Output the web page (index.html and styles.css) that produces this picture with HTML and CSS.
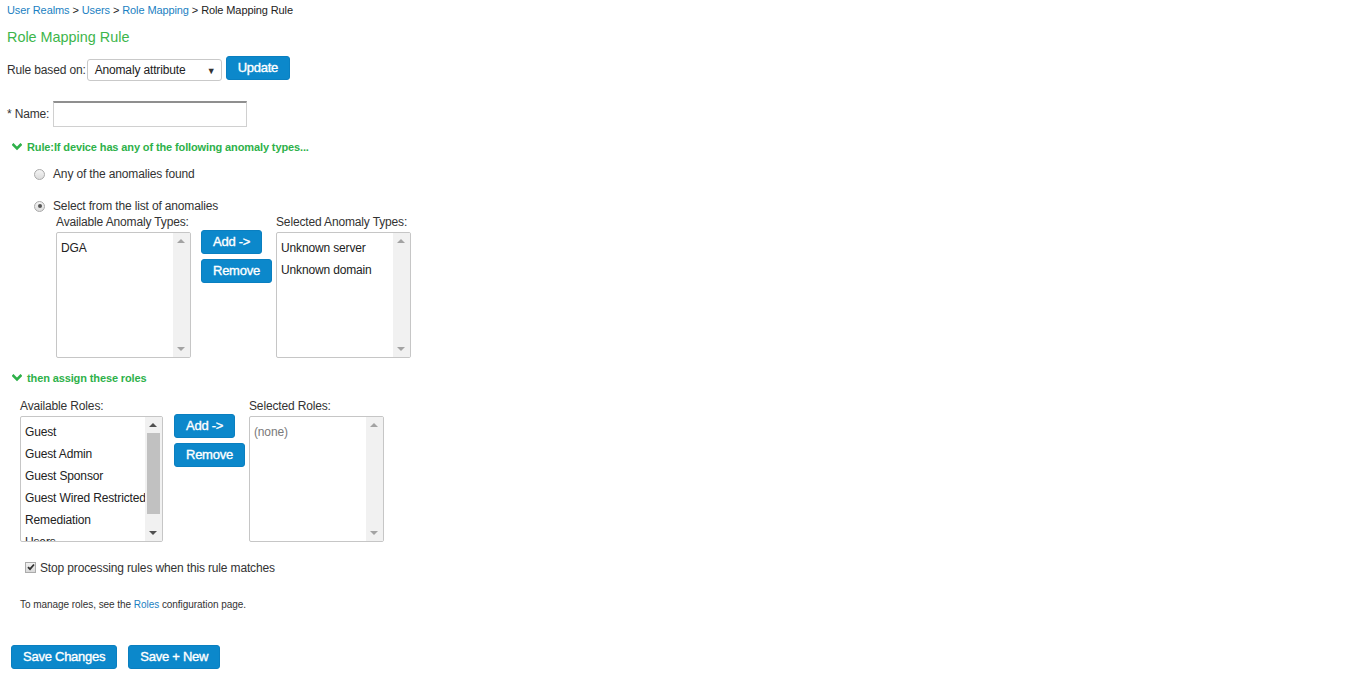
FILE: index.html
```html
<!DOCTYPE html>
<html>
<head>
<meta charset="utf-8">
<title>Role Mapping Rule</title>
<link rel="stylesheet" href="styles.css">
</head>
<body>
<div class="page">
  <div class="crumb"><a>User Realms</a> &gt; <a>Users</a> &gt; <a>Role Mapping</a> &gt; Role Mapping Rule</div>
  <h1 class="title">Role Mapping Rule</h1>

  <div class="rule-row">
    <span class="lbl">Rule based on:</span>
    <div class="select"><span>Anomaly attribute</span><span class="caret">&#9660;</span></div>
    <button class="btn btn-update">Update</button>
  </div>

  <div class="name-row">
    <span class="lbl">* Name:</span>
    <div class="textbox"></div>
  </div>

  <div class="section-head sh1">
    <svg class="chev" width="10" height="8" viewBox="0 0 10 8"><polyline points="1.5,1.8 5,5.3 8.5,1.8" fill="none" stroke="#2eb14a" stroke-width="2.6" stroke-linecap="square"/></svg>
    <span>Rule:If device has any of the following anomaly types...</span>
  </div>

  <div class="radio-row r1"><span class="radio"></span><span>Any of the anomalies found</span></div>
  <div class="radio-row r2"><span class="radio on"></span><span>Select from the list of anomalies</span></div>

  <div class="picker picker-anom">
    <div class="pcol">
      <div class="plabel">Available Anomaly Types:</div>
      <div class="listbox w135">
        <div class="items"><div>DGA</div></div>
        <div class="sbar"><span class="up"></span><span class="dn"></span></div>
      </div>
    </div>
    <div class="bcol">
      <button class="btn">Add -&gt;</button>
      <button class="btn">Remove</button>
    </div>
    <div class="pcol">
      <div class="plabel">Selected Anomaly Types:</div>
      <div class="listbox w135">
        <div class="items"><div>Unknown server</div><div>Unknown domain</div></div>
        <div class="sbar"><span class="up"></span><span class="dn"></span></div>
      </div>
    </div>
  </div>

  <div class="section-head sh2">
    <svg class="chev" width="10" height="8" viewBox="0 0 10 8"><polyline points="1.5,1.8 5,5.3 8.5,1.8" fill="none" stroke="#2eb14a" stroke-width="2.6" stroke-linecap="square"/></svg>
    <span>then assign these roles</span>
  </div>

  <div class="picker picker-roles">
    <div class="pcol">
      <div class="plabel">Available Roles:</div>
      <div class="listbox w143">
        <div class="items"><div>Guest</div><div>Guest Admin</div><div>Guest Sponsor</div><div>Guest Wired Restricted</div><div>Remediation</div><div>Users</div><div>Visitors</div></div>
        <div class="sbar dark"><span class="up"></span><span class="thumb"></span><span class="dn"></span></div>
      </div>
    </div>
    <div class="bcol">
      <button class="btn">Add -&gt;</button>
      <button class="btn">Remove</button>
    </div>
    <div class="pcol">
      <div class="plabel">Selected Roles:</div>
      <div class="listbox w135">
        <div class="items"><div class="none">(none)</div></div>
        <div class="sbar"><span class="up"></span><span class="dn"></span></div>
      </div>
    </div>
  </div>

  <div class="check-row">
    <span class="checkbox"><svg width="8" height="8" viewBox="0 0 8 8"><polyline points="1,4.2 3,6.2 7,1.5" fill="none" stroke="#333" stroke-width="1.8"/></svg></span>
    <span class="check-text">Stop processing rules when this rule matches</span>
  </div>

  <div class="note">To manage roles, see the <a>Roles</a> configuration page.</div>

  <div class="actions">
    <button class="btn">Save Changes</button>
    <button class="btn">Save + New</button>
  </div>
</div>
</body>
</html>
```

FILE: styles.css
```css
html, body {
  margin: 0;
  padding: 0;
  background: #ffffff;
}
body {
  font-family: "Liberation Sans", Arial, sans-serif;
  font-size: 12px;
  letter-spacing: -0.15px;
  color: #333333;
}
.page {
  padding-left: 7px;
  padding-top: 3px;
}
a {
  color: #1b7fc2;
  text-decoration: none;
}
.crumb {
  font-size: 11px;
  letter-spacing: -0.1px;
  line-height: 14px;
  height: 14px;
  color: #222;
}
.title {
  margin: 10px 0 0 0;
  font-size: 14.4px;
  letter-spacing: 0;
  font-weight: normal;
  line-height: 20px;
  height: 20px;
  color: #3db54b;
}
.rule-row {
  margin-top: 9px;
  display: flex;
  align-items: flex-start;
  height: 25px;
}
.lbl {
  line-height: 22px;
  margin-top: 3px;
  color: #333;
}
.select {
  margin-top: 3px;
  margin-left: 1px;
  height: 20px;
  border: 1px solid #c9c9c9;
  border-radius: 3px;
  display: flex;
  align-items: center;
  justify-content: space-between;
  padding: 0 0 0 7px;
  font-size: 12px;
  color: #222;
  width: 126px;
}
.select .caret {
  font-size: 9px;
  color: #333;
  margin-right: 5px;
  margin-top: 1px;
}
.btn {
  font-family: "Liberation Sans", Arial, sans-serif;
  font-size: 13px;
  font-weight: normal;
  letter-spacing: -0.25px;
  -webkit-text-stroke: 0.35px #ffffff;
  color: #ffffff;
  background: #0c88cb;
  border: 1px solid #0a7fc0;
  border-radius: 3px;
  height: 24px;
  padding: 0 11px;
  margin: 0;
  line-height: 22px;
  cursor: pointer;
}
.btn-update {
  margin-left: 4px;
  width: 64px;
}
.name-row {
  margin-top: 20px;
  display: flex;
  align-items: center;
  height: 26px;
}
.name-row .lbl {
  margin-top: 0;
  line-height: 26px;
}
.textbox {
  margin-left: 4px;
  border: 1px solid #d0d0d0;
  border-top: 2px solid #8f8f8f;
  box-sizing: border-box;
  height: 26px;
  width: 194px;
}
.section-head {
  display: flex;
  align-items: center;
  padding-left: 5px;
  font-size: 11px;
  letter-spacing: -0.12px;
  font-weight: bold;
  line-height: 14px;
  color: #2eb14a;
}
.section-head .chev {
  margin-right: 5px;
}
.sh1 {
  margin-top: 13px;
}
.sh2 {
  margin-top: 13px;
}
.radio-row {
  display: flex;
  align-items: center;
  padding-left: 27px;
  line-height: 16px;
}
.r1 {
  margin-top: 12px;
}
.r2 {
  margin-top: 16px;
}
.radio {
  width: 9px;
  height: 9px;
  border: 1px solid #a9a9a9;
  border-radius: 50%;
  background: linear-gradient(#f4f4f4, #dcdcdc);
  margin-right: 8px;
  display: inline-flex;
  align-items: center;
  justify-content: center;
  flex: none;
}
.radio.on::after {
  content: "";
  width: 4px;
  height: 4px;
  border-radius: 50%;
  background: #555;
}
.picker {
  display: flex;
  align-items: flex-start;
}
.picker-anom {
  margin-top: 0;
  padding-left: 49px;
}
.picker-roles {
  margin-top: 13px;
  padding-left: 13px;
}
.pcol {
  display: flex;
  flex-direction: column;
}
.plabel {
  line-height: 14px;
  height: 14px;
  padding-top: 1px;
  margin-bottom: 3px;
  color: #333;
  white-space: nowrap;
}
.listbox {
  height: 126px;
  border: 1px solid #c6c6c6;
  border-radius: 2px;
  box-sizing: border-box;
  display: flex;
  overflow: hidden;
}
.w135 { width: 135px; }
.w143 { width: 143px; }
.items {
  flex: 1;
  min-width: 0;
  padding: 4px 0 0 4px;
  overflow: hidden;
  white-space: nowrap;
}
.items div {
  line-height: 22px;
  color: #222;
}
.items .none {
  color: #7a7a7a;
}
.sbar {
  width: 17px;
  flex: none;
  background: #f1f1f1;
  position: relative;
}
.sbar .up, .sbar .dn {
  position: absolute;
  left: 4px;
  width: 0;
  height: 0;
  border-left: 4px solid transparent;
  border-right: 4px solid transparent;
}
.sbar .up {
  top: 6px;
  border-bottom: 4px solid #a3a3a3;
}
.sbar .dn {
  bottom: 6px;
  border-top: 4px solid #a3a3a3;
}
.sbar.dark .up {
  border-bottom-color: #505050;
}
.sbar.dark .dn {
  border-top-color: #505050;
}
.sbar .thumb {
  position: absolute;
  left: 2px;
  right: 2px;
  top: 16px;
  height: 81px;
  background: #c1c1c1;
}
.bcol {
  display: flex;
  flex-direction: column;
  align-items: flex-start;
  gap: 5px;
  padding-top: 16px;
  width: 70px;
  flex: none;
}
.picker-anom .bcol {
  margin-left: 10px;
  margin-right: 5px;
}
.picker-roles .bcol {
  margin-left: 11px;
  margin-right: 5px;
}
.check-row {
  margin-top: 18px;
  padding-left: 18px;
  display: flex;
  align-items: center;
  line-height: 16px;
}
.checkbox {
  width: 9px;
  height: 9px;
  border: 1px solid #ababab;
  background: linear-gradient(#f2f2f2, #d9d9d9);
  display: inline-flex;
  align-items: center;
  justify-content: center;
  margin-right: 4px;
  margin-top: -2px;
  flex: none;
}
.check-text {
  white-space: nowrap;
}
.note {
  margin-top: 23px;
  padding-left: 13px;
  font-size: 10px;
  letter-spacing: -0.05px;
  line-height: 12px;
  color: #333;
}
.actions {
  margin-top: 34px;
  padding-left: 4px;
  display: flex;
  gap: 11px;
}
```
